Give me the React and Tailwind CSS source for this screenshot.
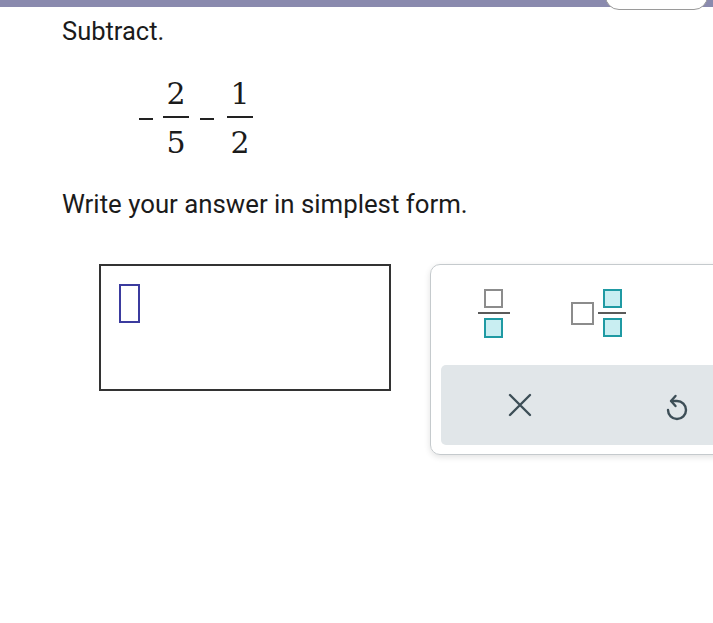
function Frac({ top, bottom }) {
  return (
    <div className="flex flex-col items-center">
      <span className="leading-[30px] text-[30px]">{top}</span>
      <div className="mt-[7px] h-[2px] w-[26px] bg-[#222]"></div>
      <span className="mt-[10px] leading-[30px] text-[30px]">{bottom}</span>
    </div>
  );
}

function Minus() {
  return <div className="h-[2px] w-[14px] bg-[#222]"></div>;
}

function Box({ className }) {
  return <div className={"border-2 " + className}></div>;
}

function FracIcon() {
  return (
    <div className="flex flex-col items-center">
      <Box className="h-[19px] w-[19px] border-[#8c8c8c]" />
      <div className="my-[4px] h-[2px] w-[32px] bg-[#5a5a5a]"></div>
      <Box className="h-[20px] w-[19px] border-[#1f9aa3] bg-[#c9eef2]" />
    </div>
  );
}

function MixedIcon() {
  return (
    <div className="flex items-center gap-[4px]">
      <Box className="h-[23px] w-[23px] border-[#8c8c8c]" />
      <div className="flex flex-col items-center">
        <Box className="h-[19px] w-[19px] border-[#1f9aa3] bg-[#c9eef2]" />
        <div className="my-[4px] h-[2px] w-[28px] bg-[#5a5a5a]"></div>
        <Box className="h-[19px] w-[19px] border-[#1f9aa3] bg-[#c9eef2]" />
      </div>
    </div>
  );
}

function CloseIcon() {
  return (
    <svg width="26" height="26" viewBox="0 0 26 26" fill="none" stroke="#3d4e57" strokeWidth="2.4" strokeLinecap="round">
      <path d="M3 3 23 23M23 3 3 23" />
    </svg>
  );
}

function UndoIcon() {
  return (
    <svg width="24" height="32" viewBox="0 0 24 32" fill="none" stroke="#3d4e57" strokeWidth="2.4" strokeLinecap="round" strokeLinejoin="round">
      <path d="M3 21a9 9 0 1 0 9-9H6.5" />
      <path d="M10.5 7 6 12l4.5 5" />
    </svg>
  );
}

export default function App() {
  return (
    <div className="relative h-[623px] w-[713px] overflow-hidden bg-white font-['Roboto',sans-serif] text-[#1b1b1b]">
      <div className="h-[7px] bg-[#8a8aae]"></div>
      <div className="absolute right-[5px] top-[-12px] h-[22px] w-[103px] rounded-b-[14px] rounded-t-[4px] border border-[#9a9a9a] bg-white"></div>

      <div className="pl-[62px] pt-[9px]">
        <p className="text-[25.5px] leading-[30px]">Subtract.</p>

        <div className="ml-[77px] mt-[33px] flex items-center gap-[10px] font-['DejaVu_Serif',serif] text-[#1b1b1b]">
          <Minus />
          <Frac top="2" bottom="5" />
          <div className="ml-[1px] mr-[3px]">
            <Minus />
          </div>
          <Frac top="1" bottom="2" />
        </div>

        <p className="mt-[31px] text-[25.8px] leading-[30px]">Write your answer in simplest form.</p>

        <div className="mt-[45px] flex items-start gap-[39px]">
          <div className="ml-[37px] h-[127px] w-[292px] shrink-0 border-2 border-[#333] pl-[18px] pt-[18px]">
            <div className="h-[39px] w-[21px] border-2 border-[#3b3b9e]"></div>
          </div>

          <div className="w-[336px] shrink-0 rounded-[10px] border border-[#c5cacd] px-[10px] pb-[9px] pt-[10px] shadow-[0_2px_6px_rgba(0,0,0,0.12)]">
            <div className="flex h-[76px]">
              <div className="flex w-[105px] items-center justify-center">
                <FracIcon />
              </div>
              <div className="flex w-[105px] items-center justify-center">
                <MixedIcon />
              </div>
            </div>
            <div className="mt-[14px] flex h-[80px] rounded-[5px] bg-[#e1e6e9]">
              <div className="flex w-[157px] items-center justify-center">
                <CloseIcon />
              </div>
              <div className="flex w-[157px] items-center justify-center">
                <UndoIcon />
              </div>
            </div>
          </div>
        </div>
      </div>
    </div>
  );
}
